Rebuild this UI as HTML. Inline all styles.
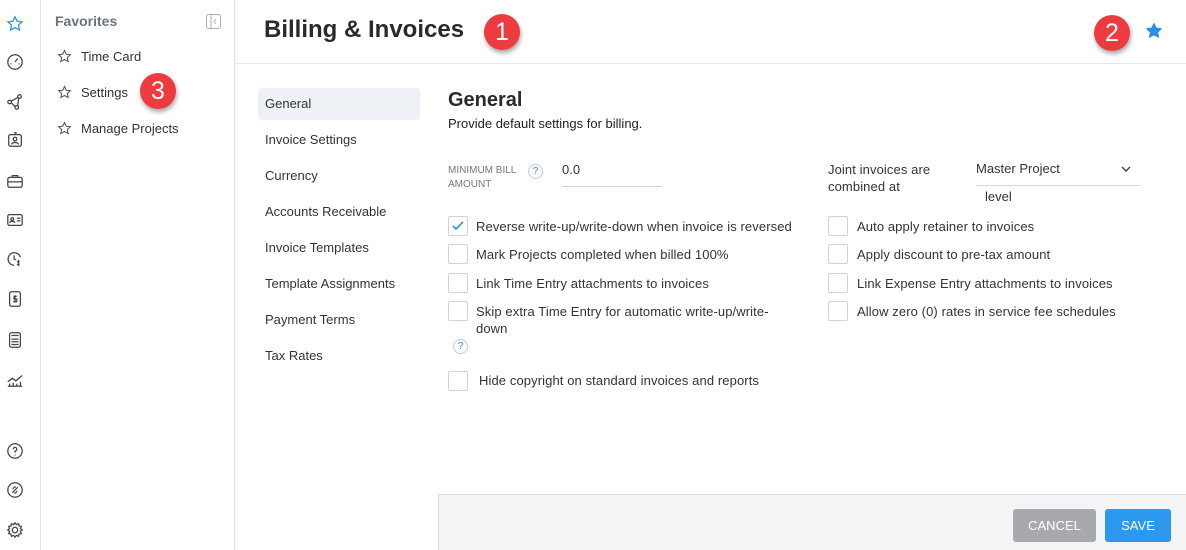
<!DOCTYPE html>
<html><head><meta charset="utf-8"><style>
*{box-sizing:border-box;margin:0;padding:0}
body{width:1186px;height:550px;overflow:hidden;background:#fff;font-family:"Liberation Sans",Arial,sans-serif;color:#333;position:relative;font-size:13px}
.abs{position:absolute}
.rail{left:0;top:0;width:41px;height:550px;border-right:1px solid #dfe3ea}
.rail svg{position:absolute;left:6px;width:18px;height:18px;fill:none;stroke:#444;stroke-width:1.4}
.fav{left:41px;top:0;width:194px;height:550px;border-right:1px solid #e2e5ea;box-shadow:1px 0 3px rgba(0,0,0,.06)}
.fav h3{position:absolute;left:14px;top:13px;font-size:14px;color:#6b7280;font-weight:bold}
.fav .it{position:absolute;left:16px;font-size:13px;color:#333;display:flex;align-items:center;gap:9px}
.hdr{left:236px;top:0;width:950px;height:64px;border-bottom:1px solid #e3e6eb}
.hdr h1{position:absolute;left:28px;top:16px;font-size:24px;font-weight:bold;color:#2a2a2a}
.badge{width:36px;height:36px;border-radius:50%;background:#ee3b3f;color:#fff;font-size:25px;text-align:center;line-height:37px;box-shadow:1px 3px 5px rgba(0,0,0,.35)}
.nav div{position:absolute;left:258px;width:162px;height:32px;line-height:32px;padding-left:7px;font-size:13px;color:#333}
.cb{position:absolute;width:20px;height:20px;border:1px solid #cfd4da;border-radius:2px;background:#fff}
.lb{position:absolute;font-size:13px;color:#333;line-height:17px;letter-spacing:.1px}
.btn{position:absolute;top:509px;height:33px;border-radius:3px;color:#fff;font-size:13px;text-align:center;line-height:33px}
</style></head><body>
<div class="abs rail">
<svg style="top:15px" viewBox="0 0 20 20" stroke="#2d8fe6"><path d="M10 2l2.4 5 5.4.6-4 3.7 1.1 5.4L10 14l-4.9 2.7 1.1-5.4-4-3.7 5.4-.6z" stroke="#2d8fe6"/></svg>
<svg style="top:53px" viewBox="0 0 20 20"><circle cx="10" cy="10" r="8"/><path d="M10 10l3-4M5 12h1M14 12h1"/></svg>
<svg style="top:93px" viewBox="0 0 20 20"><circle cx="4" cy="10" r="2"/><circle cx="15" cy="4" r="2"/><circle cx="12" cy="16" r="2"/><path d="M6 9l7-4M6 11l4 4M14 6l-1 8"/></svg>
<svg style="top:131px" viewBox="0 0 20 20"><rect x="3" y="4" width="14" height="13" rx="2"/><circle cx="10" cy="9" r="2"/><path d="M6 15c1-3 7-3 8 0M9 2h2v2"/></svg>
<svg style="top:172px" viewBox="0 0 20 20"><rect x="2" y="6" width="16" height="11" rx="2"/><path d="M7 6V4h6v2M2 11h16"/></svg>
<svg style="top:211px" viewBox="0 0 20 20"><rect x="2" y="4" width="16" height="12" rx="2"/><circle cx="7" cy="9" r="1.5"/><path d="M4 13c1-2 5-2 6 0M12 8h4M12 11h4"/></svg>
<svg style="top:250px" viewBox="0 0 20 20"><path d="M16 8A7 7 0 1 0 9 17"/><path d="M9 6v4l2 1M14 11v7M12 13h3M12 16h3"/></svg>
<svg style="top:290px" viewBox="0 0 20 20"><rect x="4" y="2" width="12" height="16" rx="2"/><path d="M12 7h-3v3h3v3H8M10 6v8"/></svg>
<svg style="top:331px" viewBox="0 0 20 20"><rect x="4" y="2" width="12" height="16" rx="2"/><path d="M6 5h8M6 9h8M6 12h8M6 15h8"/></svg>
<svg style="top:371px" viewBox="0 0 20 20"><path d="M2 12l5-4 4 3 7-6M2 17h16M4 14v3M8 13v4M12 14v3M16 12v5"/></svg>
<svg style="top:442px" viewBox="0 0 20 20"><circle cx="10" cy="10" r="8"/><path d="M8 8a2 2 0 1 1 2 2v2M10 14v1"/></svg>
<svg style="top:481px" viewBox="0 0 20 20"><circle cx="10" cy="10" r="8"/><path d="M7 13l6-6M8 9a2 2 0 0 1 3-2M12 11a2 2 0 0 1-3 2"/></svg>
<svg style="top:521px" viewBox="0 0 20 20"><circle cx="10" cy="10" r="3"/><path d="M10 2l1.5 2 2.5-1 .5 2.5 2.5.5-1 2.5 2 1.5-2 1.5 1 2.5-2.5.5-.5 2.5-2.5-1L10 18l-1.5-2-2.5 1-.5-2.5-2.5-.5 1-2.5L2 10l2-1.5-1-2.5 2.5-.5.5-2.5 2.5 1z"/></svg>
</div>
<div class="abs fav">
<h3>Favorites</h3>
<svg class="abs" style="left:165px;top:14px" width="15" height="15" viewBox="0 0 15 15" fill="none" stroke="#a9b1bd"><rect x=".5" y=".5" width="14" height="14" rx="2"/><path d="M5 1v13M10 5l-2 2.5 2 2.5"/></svg>
<div class="it" style="top:49px"><svg width="15" height="15" viewBox="0 0 20 20" fill="none" stroke="#555" stroke-width="1.4"><path d="M10 2l2.4 5 5.4.6-4 3.7 1.1 5.4L10 14l-4.9 2.7 1.1-5.4-4-3.7 5.4-.6z"/></svg>Time Card</div>
<div class="it" style="top:85px"><svg width="15" height="15" viewBox="0 0 20 20" fill="none" stroke="#555" stroke-width="1.4"><path d="M10 2l2.4 5 5.4.6-4 3.7 1.1 5.4L10 14l-4.9 2.7 1.1-5.4-4-3.7 5.4-.6z"/></svg>Settings</div>
<div class="it" style="top:121px"><svg width="15" height="15" viewBox="0 0 20 20" fill="none" stroke="#555" stroke-width="1.4"><path d="M10 2l2.4 5 5.4.6-4 3.7 1.1 5.4L10 14l-4.9 2.7 1.1-5.4-4-3.7 5.4-.6z"/></svg>Manage Projects</div>
</div>
<div class="abs badge" style="left:140px;top:73px">3</div>
<div class="abs hdr"><h1>Billing &amp; Invoices</h1></div>
<div class="abs badge" style="left:484px;top:14px">1</div>
<div class="abs badge" style="left:1094px;top:15px">2</div>
<svg class="abs" style="left:1145px;top:22px" width="18" height="18" viewBox="0 0 20 20"><path d="M10 2l2.4 5 5.4.6-4 3.7 1.1 5.4L10 14l-4.9 2.7 1.1-5.4-4-3.7 5.4-.6z" fill="#2d8fe6" stroke="#2d8fe6" stroke-linejoin="round" stroke-width="1.5"/></svg>
<div class="nav">
<div style="top:88px;background:#eef1f5;border-radius:4px">General</div>
<div style="top:124px">Invoice Settings</div>
<div style="top:160px">Currency</div>
<div style="top:196px">Accounts Receivable</div>
<div style="top:232px">Invoice Templates</div>
<div style="top:268px">Template Assignments</div>
<div style="top:304px">Payment Terms</div>
<div style="top:340px">Tax Rates</div>
</div>
<div class="abs" style="left:448px;top:89px;font-size:20px;font-weight:bold;color:#2a2a2a">General</div>
<div class="abs" style="left:448px;top:116px;font-size:13px;color:#222">Provide default settings for billing.</div>
<div class="abs" style="left:448px;top:164px;font-size:10px;color:#777;line-height:14px">MINIMUM BILL<br>AMOUNT</div>
<div class="abs" style="left:528px;top:164px;width:15px;height:15px;border:1px solid #bcd;border-radius:50%;color:#2d8fe6;font-size:10px;text-align:center;line-height:13px">?</div>
<div class="abs" style="left:562px;top:162px;width:100px;height:25px;border-bottom:1px solid #d5d9de;font-size:13px">0.0</div>
<div class="lb" style="left:828px;top:161px">Joint invoices are<br>combined at</div>
<div class="abs" style="left:976px;top:161px;width:164px;height:25px;border-bottom:1px solid #d5d9de;font-size:13px">Master Project
<svg class="abs" style="right:8px;top:3px" width="12" height="10" viewBox="0 0 12 10"><path d="M2 3l4 4 4-4" fill="none" stroke="#444" stroke-width="1.4"/></svg></div>
<div class="abs" style="left:985px;top:189px;font-size:13px">level</div>
<div class="cb" style="left:448px;top:216px"><svg width="18" height="18" viewBox="0 0 18 18"><path d="M4 9l3 3 7-7" fill="none" stroke="#2d8fe6" stroke-width="1.6"/></svg></div>
<div class="lb" style="left:476px;top:218px">Reverse write-up/write-down when invoice is reversed</div>
<div class="cb" style="left:448px;top:244px"></div><div class="lb" style="left:476px;top:246px">Mark Projects completed when billed 100%</div>
<div class="cb" style="left:448px;top:273px"></div><div class="lb" style="left:476px;top:275px">Link Time Entry attachments to invoices</div>
<div class="cb" style="left:448px;top:301px"></div><div class="lb" style="left:476px;top:303px">Skip extra Time Entry for automatic write-up/write-<br>down</div>
<div class="abs" style="left:453px;top:339px;width:15px;height:15px;border:1px solid #bcd;border-radius:50%;color:#2d8fe6;font-size:10px;text-align:center;line-height:13px">?</div>
<div class="cb" style="left:448px;top:371px"></div><div class="lb" style="left:479px;top:372px">Hide copyright on standard invoices and reports</div>
<div class="cb" style="left:828px;top:216px"></div><div class="lb" style="left:857px;top:218px">Auto apply retainer to invoices</div>
<div class="cb" style="left:828px;top:244px"></div><div class="lb" style="left:857px;top:246px">Apply discount to pre-tax amount</div>
<div class="cb" style="left:828px;top:273px"></div><div class="lb" style="left:857px;top:275px">Link Expense Entry attachments to invoices</div>
<div class="cb" style="left:828px;top:301px"></div><div class="lb" style="left:857px;top:303px">Allow zero (0) rates in service fee schedules</div>
<div class="abs" style="left:438px;top:494px;width:748px;height:56px;background:#f3f4f6;border-top:1px solid #d9dde3;border-left:1px solid #d9dde3"></div>
<div class="btn" style="left:1013px;width:83px;background:#a7a9ac">CANCEL</div>
<div class="btn" style="left:1105px;width:66px;background:#2d98ef">SAVE</div>
</body></html>
